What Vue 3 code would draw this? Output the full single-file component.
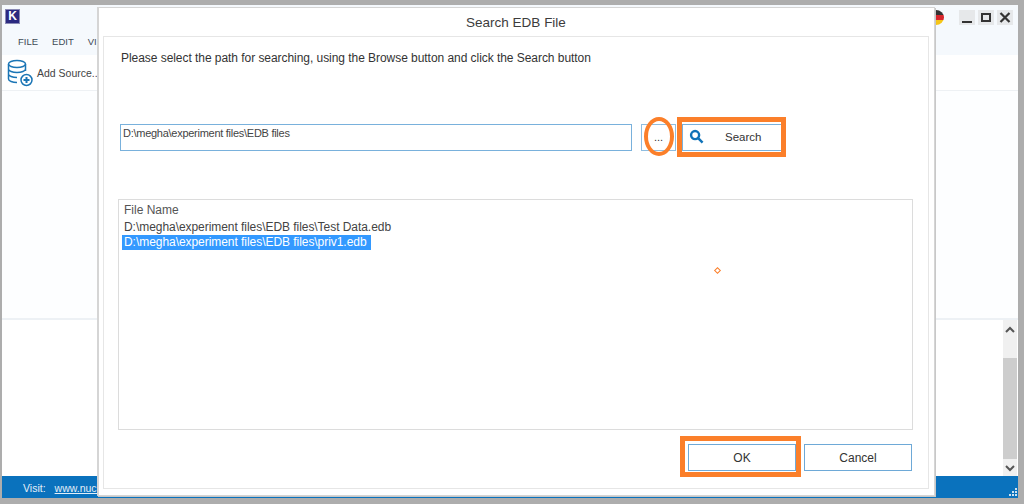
<script setup>
const files = ['D:\\megha\\experiment files\\EDB files\\Test Data.edb', 'D:\\megha\\experiment files\\EDB files\\priv1.edb']
const menus = ['FILE', 'EDIT', 'VIEW']
</script>

<template>
  <div class="screen">
    <div class="window">
      <header class="titlebar">
        <div class="logo"><span>K</span></div>
        <div class="controls">
          <svg class="flag" width="16" height="15" viewBox="0 0 16 15"><path d="M0 0h16v5H0z" fill="#333"/><path d="M0 5h16v5H0z" fill="#d8262c"/><path d="M0 10h16v5H0z" fill="#f5c518"/></svg>
          <button class="ctl"><svg width="16" height="15" viewBox="0 0 16 15"><path d="M3 12h10" stroke="#333" stroke-width="2"/></svg></button>
          <button class="ctl"><svg width="16" height="15" viewBox="0 0 16 15"><path d="M4 4h8v7H4z" fill="none" stroke="#333" stroke-width="2"/></svg></button>
          <button class="ctl"><svg width="16" height="15" viewBox="0 0 16 15"><path d="M3.500 3l9 9M12.500 3l-9 9" stroke="#333" stroke-width="2.200"/></svg></button>
        </div>
      </header>
      <nav class="menubar"><span v-for="m in menus" :key="m">{{ m }}</span></nav>
      <div class="toolbar">
        <svg width="26" height="28" viewBox="0 0 26 28" fill="none" stroke="#1b75b5" stroke-width="1.500">
          <ellipse cx="10" cy="5" rx="8.500" ry="3.500"/>
          <path d="M1.500 5v15c0 2 4 3.500 8.500 3.500M18.500 5v7M1.500 10c0 2 4 3.500 8.500 3.500s8.500-1.500 8.500-3.500M1.500 15c0 2 4 3.500 8.500 3.500"/>
          <circle cx="19.500" cy="21" r="5.500" fill="#fff"/>
          <path d="M19.500 18v6M16.500 21h6" stroke-width="2"/>
        </svg>
        <span>Add Source...</span>
      </div>
      <main class="workspace"></main>
      <section class="lower">
        <div class="scrollbar">
          <svg width="14" height="18" viewBox="0 0 14 18"><path d="M3 12l4-4 4 4" fill="none" stroke="#555" stroke-width="2"/></svg>
          <div class="track"><div class="thumb"></div></div>
          <svg width="14" height="17" viewBox="0 0 14 17"><path d="M3 7l4 4 4-4" fill="none" stroke="#555" stroke-width="2"/></svg>
        </div>
      </section>
      <footer class="status">
        <span>Visit:</span><a>www.nucleustechnologies.com</a>
        <svg class="grip" width="9" height="9" viewBox="0 0 9 9" fill="#cfe2f0"><path d="M7 0h2v2H7zM4 3h2v2H4zM7 3h2v2H7zM1 6h2v2H1zM4 6h2v2H4zM7 6h2v2H7z"/></svg>
      </footer>
    </div>

    <div class="dialog">
      <div class="dialog-title">Search EDB File</div>
      <div class="panel">
        <p class="prompt">Please select the path for searching, using the Browse button and click the Search button</p>
        <div class="path-row">
          <div class="path">D:\megha\experiment files\EDB files</div>
          <button class="browse">...</button>
          <button class="search">
            <svg width="15" height="15" viewBox="0 0 16 16" fill="none" stroke="#0f72b8" stroke-width="2.600"><circle cx="6.500" cy="6.500" r="4.300"/><path d="M10 10l4.500 4.500"/></svg>
            <span>Search</span>
          </button>
        </div>
        <div class="list">
          <div class="list-head">File Name</div>
          <div v-for="(f, i) in files" :key="f" class="row" :class="{ selected: i === 1 }"><span>{{ f }}&nbsp;</span></div>
        </div>
        <div class="actions">
          <button class="action">OK</button>
          <button class="action">Cancel</button>
        </div>
      </div>
    </div>

    <i class="mark ellipse"></i>
    <i class="mark box-search"></i>
    <i class="mark box-ok"></i>
    <i class="mark dot"></i>
  </div>
</template>

<style>
html, body { margin: 0; }
</style>

<style scoped>
.screen {
  position: relative;
  width: 1024px;
  height: 504px;
  box-sizing: border-box;
  padding: 5px 6px 6px 2px;
  background: #adadad;
  overflow: hidden;
  font-family: "Liberation Sans", Arial, sans-serif;
  color: #333;
}
.window {
  height: 100%;
  display: flex;
  flex-direction: column;
  background: #fff;
}
.titlebar {
  height: 25px;
  flex: none;
  display: flex;
  justify-content: space-between;
  align-items: flex-start;
  padding: 4px 5px 0 3px;
  box-sizing: border-box;
  background: #f5f9fd;
}
.logo {
  width: 15px;
  height: 15px;
  background: #2b2a80;
  border: 1px solid #8a8ab5;
  box-sizing: border-box;
  color: #fff;
  font-size: 12px;
  font-weight: bold;
  line-height: 13px;
  text-align: center;
}
.controls { display: flex; align-items: center; gap: 2px; padding-top: 1px; }
.flag { margin-right: 13px; border-radius: 50%; }
.ctl {
  width: 16px;
  height: 15px;
  padding: 0;
  border: 0;
  background: #e6e8ea;
  display: block;
}
.ctl + .ctl { margin-left: 1px; }
.ctl svg { display: block; }
.menubar {
  height: 25px;
  flex: none;
  display: flex;
  gap: 14px;
  padding: 4px 0 0 16px;
  box-sizing: border-box;
  background: #f5f9fd;
  font-size: 9.500px;
  line-height: 16px;
  color: #3d4a55;
}
.toolbar {
  height: 36px;
  flex: none;
  display: flex;
  align-items: center;
  gap: 4px;
  padding-left: 5px;
  box-sizing: border-box;
  border-bottom: 1px solid #eef1f4;
  font-size: 10.500px;
  color: #444;
}
.workspace {
  flex: 1;
  background: #fdfeff;
  border-bottom: 2px solid #edf1f5;
}
.lower {
  height: 156px;
  flex: none;
  display: flex;
  justify-content: flex-end;
}
.scrollbar {
  width: 14px;
  margin-right: 1px;
  display: flex;
  flex-direction: column;
  background: #f0f0f0;
}
.scrollbar svg { display: block; flex: none; }
.track { flex: 1; padding-top: 20px; display: flex; }
.thumb { flex: 1; background: #cdcdcd; }
.status {
  height: 22px;
  flex: none;
  display: flex;
  align-items: center;
  position: relative;
  padding: 2px 0 0 21px;
  box-sizing: border-box;
  background: #0a72bd;
  color: #e3eff8;
  font-size: 10.500px;
}
.status a { margin-left: 9px; text-decoration: underline; }
.grip { position: absolute; right: 1px; bottom: 1px; }

.dialog {
  position: absolute;
  left: 97px;
  top: 7px;
  width: 838px;
  height: 489px;
  box-sizing: border-box;
  display: flex;
  flex-direction: column;
  background: #fff;
  border: 1px solid #d5d5d5;
  border-width: 1px 1px 1px 2px;
  padding: 0 5px 6px 4px;
  box-shadow: 1px 1px 0 #c8c8c8;
}
.dialog-title {
  height: 28px;
  flex: none;
  text-align: center;
  font-size: 13.500px;
  line-height: 29px;
  color: #3c3c3c;
}
.panel {
  flex: 1;
  display: flex;
  flex-direction: column;
  border: 1px solid #e6e6e6;
  padding: 0 15px 0 14px;
  min-height: 0;
}
.prompt {
  margin: 14px 0 0 3px;
  height: 15px;
  font-size: 12px;
  letter-spacing: -0.050px;
  line-height: 15px;
  color: #333;
  flex: none;
}
.path-row {
  display: flex;
  align-items: stretch;
  height: 27px;
  margin: 58px 0 0 2px;
  flex: none;
}
.path {
  width: 512px;
  box-sizing: border-box;
  border: 1px solid #79b1dc;
  border-left-width: 1.500px;
  font-size: 11px;
  letter-spacing: -0.270px;
  line-height: 13px;
  padding: 2px 0 0 2px;
  color: #444;
}
.browse {
  width: 35px;
  margin-left: 9px;
  padding: 0 0 2px;
  border: 1px solid #8fbde0;
  background: #fff;
  font: 11px "Liberation Sans", Arial, sans-serif;
  color: #333;
}
.search {
  width: 100px;
  margin-left: 6px;
  display: flex;
  align-items: center;
  padding: 0 0 2px 6px;
  border: 1px solid #79b1dc;
  background: #fff;
  font: 11.500px "Liberation Sans", Arial, sans-serif;
  color: #333;
}
.search span { margin-left: 21px; }
.list {
  height: 231px;
  margin-top: 48px;
  flex: none;
  box-sizing: border-box;
  border: 1px solid #dcdcdc;
  padding: 3px 0 0 3px;
  font-size: 12px;
  line-height: 15px;
  color: #444;
}
.list-head { height: 17px; color: #555; padding-left: 2px; }
.row { height: 15px; letter-spacing: -0.050px; padding-left: 2px; }
.row span { display: inline-block; }
.row.selected { padding-left: 0; }
.row.selected span { background: #3399ff; color: #fff; padding: 0 1px 0 2px; }
.actions {
  display: flex;
  justify-content: flex-end;
  gap: 8px;
  margin-top: 14px;
  padding-right: 1px;
  flex: none;
}
.action {
  width: 108px;
  height: 27px;
  padding: 0;
  border: 1px solid #6ea9d7;
  background: #fff;
  font: 12px "Liberation Sans", Arial, sans-serif;
  color: #333;
}
.mark { position: absolute; display: block; box-sizing: border-box; border: 5px solid #fb7f2a; }
.ellipse { left: 644px; top: 117px; width: 30px; height: 39px; border-radius: 50%; border-width: 4.500px; }
.box-search { left: 677px; top: 117px; width: 109px; height: 40px; }
.box-ok { left: 680px; top: 436px; width: 121px; height: 41px; }
.dot { left: 715px; top: 268px; width: 5px; height: 5px; border-width: 1.500px; transform: rotate(45deg); }
</style>
